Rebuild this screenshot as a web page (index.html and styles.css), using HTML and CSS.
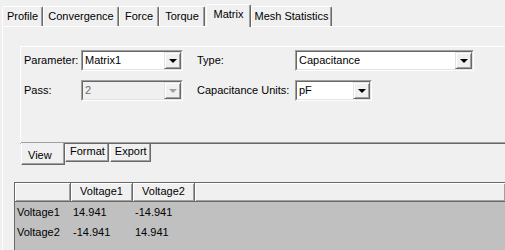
FILE: index.html
```html
<!DOCTYPE html>
<html>
<head>
<meta charset="utf-8">
<link rel="stylesheet" href="styles.css">
</head>
<body>
<div class="tabstrip">
  <div class="tab w-profile">Profile</div>
  <div class="tab w-conv">Convergence</div>
  <div class="tab w-force">Force</div>
  <div class="tab w-torque">Torque</div>
  <div class="tab sel w-matrix">Matrix</div>
  <div class="tab w-mesh">Mesh Statistics</div>
</div>
<div class="panel">
  <div class="inner">
    <div class="form">
      <div class="lbl">Parameter:</div>
      <div class="combo w1"><div class="field"><span class="val">Matrix1</span><span class="btn"><i class="arr"></i></span></div></div>
      <div class="lbl">Type:</div>
      <div class="combo w2"><div class="field"><span class="val">Capacitance</span><span class="btn"><i class="arr"></i></span></div></div>
      <div class="lbl">Pass:</div>
      <div class="combo w1 off"><div class="field"><span class="val">2</span><span class="btn"><i class="arr"></i></span></div></div>
      <div class="lbl">Capacitance Units:</div>
      <div class="combo w3"><div class="field"><span class="val">pF</span><span class="btn"><i class="arr"></i></span></div></div>
    </div>
  </div>
  <div class="btabs">
    <div class="btab bsel">View</div>
    <div class="btab">Format</div>
    <div class="btab">Export</div>
  </div>
  <div class="grid">
    <div class="ghead">
      <div class="hc c0"></div>
      <div class="hc c1">Voltage1</div>
      <div class="hc c1">Voltage2</div>
      <div class="hc cr"></div>
    </div>
    <div class="gbody">
      <div class="grow"><span class="c0 cell">Voltage1</span><span class="c1 cell">14.941</span><span class="c1 cell">-14.941</span></div>
      <div class="grow"><span class="c0 cell">Voltage2</span><span class="c1 cell">-14.941</span><span class="c1 cell">14.941</span></div>
    </div>
  </div>
</div>
</body>
</html>
```
FILE: styles.css
```css
* { box-sizing: border-box; }
html, body { margin: 0; height: 100%; }
body {
  background: #f0f0f0;
  font-family: "Liberation Sans", Arial, sans-serif;
  font-size: 11px;
  color: #000;
  overflow: hidden;
  display: flex;
  flex-direction: column;
}
.tabstrip {
  display: flex;
  align-items: flex-end;
  height: 26px;
  flex: none;
  padding-left: 2px;
}
.tab {
  height: 20px;
  line-height: 19px;
  text-align: center;
  border-top: 1px solid #fff;
  border-left: 1px solid #fff;
  border-right: 1px solid #696969;
  box-shadow: inset -1px 0 #a0a0a0;
  border-radius: 2px 2px 0 0;
  background: #f0f0f0;
}
.tab.sel {
  height: 23px;
  margin-bottom: -1px;
  line-height: 19px;
  position: relative;
  z-index: 2;
  margin-left: 1px;
}
.w-profile { width: 41px; }
.w-conv { width: 76px; }
.w-force { width: 40px; }
.w-torque { width: 46px; }
.w-matrix { width: 45px; }
.w-mesh { width: 81px; }

.panel {
  flex: 1;
  min-height: 0;
  display: flex;
  flex-direction: column;
  margin-left: 2px;
  border-top: 1px solid #fff;
  border-left: 1px solid #fff;
  padding-top: 19px;
}
.inner {
  flex: none;
  margin-left: 17px;
  height: 98px;
  border-top: 1px solid #fff;
  border-left: 1px solid #fff;
  border-bottom: 1px solid #696969;
  box-shadow: 0 -1px 0 #a0a0a0 inset;
  padding: 3px 0 0 3px;
}
.form {
  display: grid;
  grid-template-columns: 57px 102px 14px 98px auto;
  grid-auto-rows: 21px;
  row-gap: 9px;
}
.form .lbl { line-height: 21px; white-space: nowrap; color: #000; }
.form .lbl:nth-child(4n+3) { grid-column: 4; }
.combo {
  height: 21px;
  border: 1px solid;
  border-color: #a0a0a0 #fff #fff #a0a0a0;
}
.w1 { width: 102px; }
.w2 { width: 179px; }
.w3 { width: 77px; }
.field {
  height: 100%;
  display: flex;
  background: #fff;
  border: 1px solid;
  border-color: #696969 #e3e3e3 #e3e3e3 #696969;
}
.val {
  flex: 1;
  padding-left: 2px;
  line-height: 17px;
}
.btn {
  width: 17px;
  height: 17px;
  background: #f0f0f0;
  border: 1px solid;
  border-color: #e3e3e3 #696969 #696969 #e3e3e3;
  box-shadow: inset 1px 1px #fff, inset -1px -1px #a0a0a0;
  display: flex;
  align-items: center;
  justify-content: center;
}
.arr {
  width: 0;
  height: 0;
  border-left: 4px solid transparent;
  border-right: 4px solid transparent;
  border-top: 4px solid #000;
  margin-top: 1px;
}
.off .field { background: #f0f0f0; }
.off .val { color: #6d6d6d; }
.off .arr { border-top-color: #a0a0a0; }

.btabs {
  flex: none;
  display: flex;
  align-items: flex-start;
  height: 22px;
  margin-top: -1px;
  margin-left: 18px;
}
.btab {
  height: 18px;
  line-height: 15px;
  padding: 0 3px 0 4px;
  white-space: nowrap;
  background: #f0f0f0;
  border-left: 1px solid #fff;
  border-right: 1px solid #696969;
  border-bottom: 1px solid #696969;
  box-shadow: inset -1px -1px #a0a0a0;
  margin-top: 1px;
}
.btab.bsel {
  width: 44px;
  height: 22px;
  margin-top: 0;
  line-height: 24px;
  padding-left: 6px;
  position: relative;
  z-index: 2;
}
.btab + .btab + .btab { margin-left: 1px; }

.grid {
  flex: 1;
  min-height: 0;
  display: flex;
  flex-direction: column;
  margin: 17px 0 0 11px;
  border-top: 1px solid #696969;
  border-left: 1px solid #696969;
}
.ghead {
  flex: none;
  display: flex;
  height: 19px;
  background: #f0f0f0;
  border-bottom: 1px solid #696969;
}
.hc {
  height: 18px;
  line-height: 17px;
  text-align: center;
  border-right: 1px solid #696969;
  box-shadow: inset 1px 1px #fff, inset -1px -1px #a0a0a0;
}
.hc.cr { flex: 1; border-right: none; }
.c0 { width: 56px; }
.c1 { width: 62px; }
.gbody {
  flex: 1;
  background: #c0c0c0;
}
.grow {
  display: flex;
  height: 20px;
  line-height: 20px;
}
.cell { padding-left: 2px; white-space: nowrap; }
```
